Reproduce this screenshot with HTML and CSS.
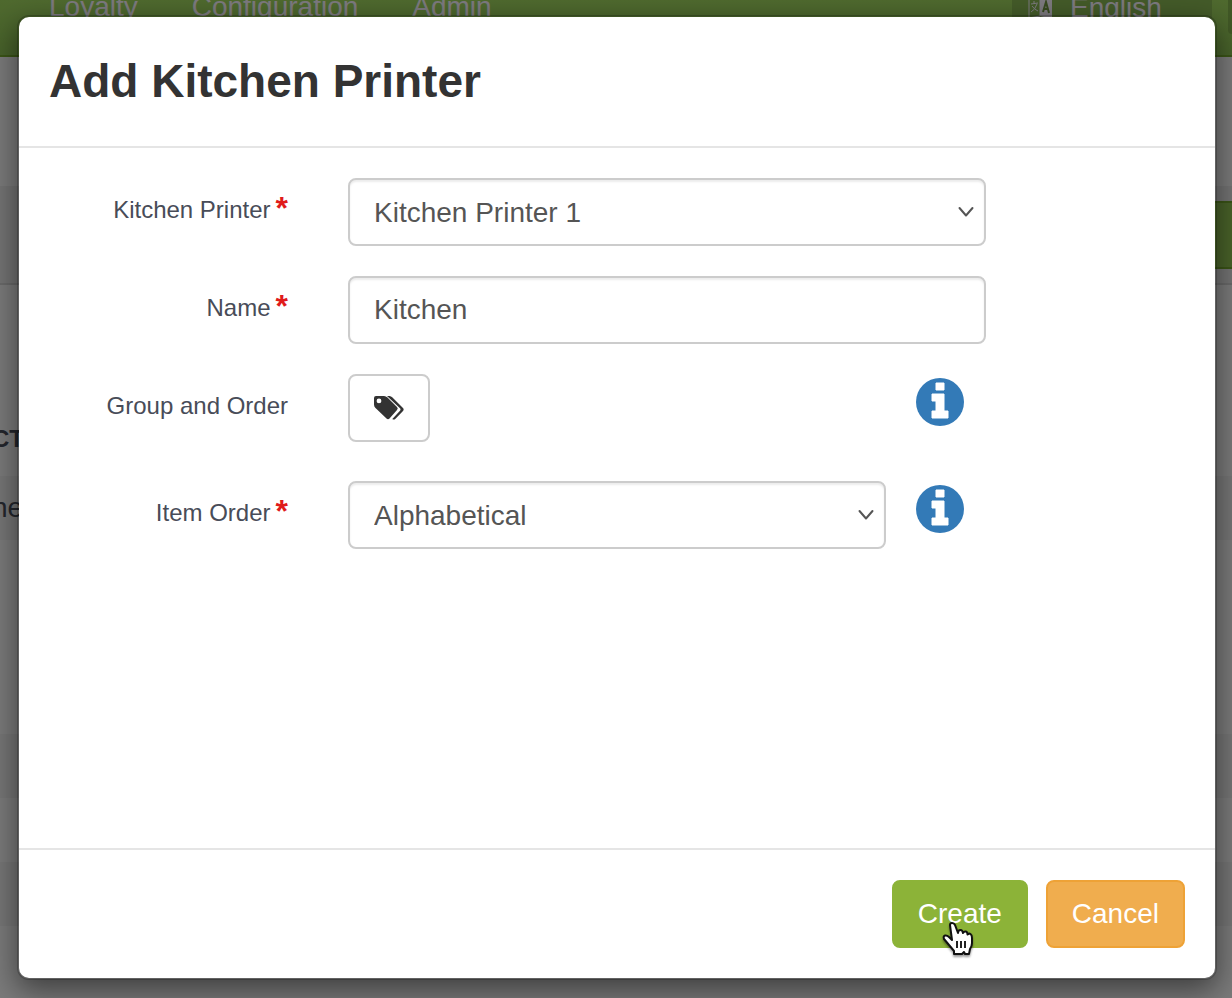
FILE: index.html
```html
<!DOCTYPE html>
<html lang="en">
<head>
    <meta charset="UTF-8">
    <title>Add Kitchen Printer</title>
    <link rel="stylesheet" href="styles.css">
</head>
<body>

    <!-- Page behind the modal -->
    <div class="page">
        <nav class="navbar">
            <a href="#">Loyalty</a>
            <a href="#">Configuration</a>
            <a href="#">Admin</a>
            <a href="#" class="language">
                <svg width="25" height="24" viewBox="0 0 25 24">
                    <path d="M1 3L12 1V20L1 22Z" fill="none" stroke="#faf5ff"/>
                    <path d="M12 0L24 3V23L12 20Z" fill="#faf5ff"/>
                    <path d="M3 8L10 7M6 5V7M9 8Q7 14 3 16M4 10Q7 14 10 15" fill="none" stroke="#faf5ff"/>
                    <path d="M15 16L18 6L21 17M16 13H20" fill="none" stroke="#6f9440" stroke-width="2"/>
                </svg>
                English
            </a>
            <span class="nav-end"></span>
        </nav>
        <div class="spacer"></div>
        <div class="toolbar">
            <div class="toolbar-action"></div>
        </div>
        <table class="list">
            <tr class="list-head"><th>CT</th></tr>
            <tr class="item odd"><td>ne</td></tr>
            <tr class="gap"><td></td></tr>
            <tr class="item odd"><td></td></tr>
            <tr class="item"><td></td></tr>
            <tr class="item odd"><td></td></tr>
        </table>
    </div>

    <div class="overlay">
        <form class="modal" role="dialog" aria-labelledby="modal-title">
            <div class="modal-header">
                <h1 id="modal-title">Add Kitchen Printer</h1>
            </div>

            <div class="modal-body">
                <div class="form-row">
                    <label for="printer">Kitchen Printer<span class="required">*</span></label>
                    <div class="select-box">
                        <select id="printer" class="field">
                            <option>Kitchen Printer 1</option>
                        </select>
                        <svg class="chevron" width="16" height="12" viewBox="0 0 16 12"><path d="M1.500 2L8 9.500L14.500 2"/></svg>
                    </div>
                </div>
                <div class="form-row">
                    <label for="name">Name<span class="required">*</span></label>
                    <input type="text" id="name" class="field" value="Kitchen">
                </div>
                <div class="form-row">
                    <label for="group">Group and Order</label>
                    <div class="with-info">
                        <button type="button" id="group" class="btn-tags" aria-label="Group and Order">
                            <svg width="30" height="24" viewBox="0 0 30 24">
                                <path fill="#333" fill-rule="evenodd" d="M2 0H10Q12 0 13.500 1.500L23 11Q24.500 12.500 23 14L15.500 22.500Q14 24 12.500 22.500L1.500 12Q0 10.500 0 8.500V2Q0 0 2 0ZM5 2.500A2.400 2.400 0 1 0 5 7.300A2.400 2.400 0 1 0 5 2.500Z"/>
                                <path fill="#333" d="M13 0H15.500Q17 0 18.500 1.500L29 12Q30.300 13.500 29 15L21.500 22.700Q19.800 24.300 18.300 22.900L26 14.800Q27 13.500 26 12.300Z"/>
                            </svg>
                        </button>
                        <svg class="info" width="48" height="48" viewBox="0 0 48 48">
                            <circle cx="24" cy="24" r="24" fill="#337ab7"/>
                            <path d="M20 5H28V12H20ZM16 16H28V33H32V40H16V33H20V23H16Z" fill="#fff" stroke="#fff" stroke-linejoin="round"/>
                        </svg>
                    </div>
                </div>
                <div class="form-row last">
                    <label for="order">Item Order<span class="required">*</span></label>
                    <div class="with-info">
                        <div class="select-box">
                            <select id="order" class="field">
                                <option>Alphabetical</option>
                            </select>
                            <svg class="chevron" width="16" height="12" viewBox="0 0 16 12"><path d="M1.500 2L8 9.500L14.500 2"/></svg>
                        </div>
                        <svg class="info" width="48" height="48" viewBox="0 0 48 48">
                            <circle cx="24" cy="24" r="24" fill="#337ab7"/>
                            <path d="M20 5H28V12H20ZM16 16H28V33H32V40H16V33H20V23H16Z" fill="#fff" stroke="#fff" stroke-linejoin="round"/>
                        </svg>
                    </div>
                </div>
            </div>

            <div class="modal-footer">
                <button type="button" class="btn btn-create">Create
                    <svg class="cursor" width="34" height="38" viewBox="0 0 34 38">
                        <path fill="#fff" stroke="#111" stroke-width="2" stroke-linejoin="round" d="M8 4Q8 2 10 2Q12 2 13 4L16 12Q16 9 18.500 9Q20.500 9 21 12Q22 10 24 10.500Q25.500 11 25.500 13.500Q27 12 28.500 13Q30 14 30 17V22Q30 25 28 28L27 33H23L22 31L20 33H12V30L7 24L2 18Q1 15 3 14.500Q5 14 7 16L10 19Z"/>
                        <path fill="none" stroke="#222" stroke-width="2" d="M15 20V27M19 20V27M23 20V27"/>
                    </svg>
                </button>
                <button type="button" class="btn btn-cancel">Cancel</button>
            </div>
        </form>
    </div>

</body>
</html>
```
FILE: styles.css
```css
* {
    box-sizing: border-box;
}
body {
    margin: 0;
    font-family: "Liberation Sans", Arial, sans-serif;
    font-size: 28px;
    color: #333;
    background-color: #fff;
}

/* page behind the modal */
.page {
    height: 100vh;
    overflow: hidden;
    color: #484c58;
    background-color: #f6f6f6;
}
.navbar {
    display: flex;
    gap: 54px;
    height: 57px;
    padding-left: 49px;
    background: linear-gradient(#9fd45e, #8fc455);
    border-bottom: 2px solid #76aa2e;
}
.navbar a {
    height: 32px;
    margin-top: -9px;
    line-height: 32px;
    color: #faf5ff;
    text-decoration: none;
}
.navbar .language {
    display: flex;
    gap: 17px;
    align-items: center;
    width: 200px;
    height: 44px;
    margin-left: auto;
    padding: 0 16px 10px;
    background-color: #88b653;
}
.nav-end {
    width: 4px;
    height: 34px;
    margin-left: -38px;
    background-color: #82b04c;
    border-radius: 0 0 0 8px;
}
.spacer {
    height: 129px;
}
.toolbar {
    display: flex;
    justify-content: flex-end;
    height: 99px;
    padding-top: 15px;
    background-color: #e9e9e9;
    border-bottom: 2px solid #d5d5d5;
}
.toolbar-action {
    width: 120px;
    height: 68px;
    background-color: #92c452;
    border: 2px solid #76aa2e;
    border-right: none;
}
.list {
    width: 100%;
    border-collapse: collapse;
}
.list th,
.list td {
    padding: 0;
    text-align: left;
    text-indent: -8px;
}
.list-head th {
    height: 191px;
    padding-top: 116px;
    font-size: 24px;
}
.item td {
    height: 64px;
    font-size: 28px;
}
.odd td {
    background-color: #ededed;
}
.gap td {
    height: 194px;
}

/* modal */
.overlay {
    position: absolute;
    inset: 0;
    padding: 15px 15px 18px 17px;
    background-color: rgba(0, 0, 0, 0.5);
}
.modal {
    display: flex;
    flex-direction: column;
    height: 100%;
    background-color: #fff;
    background-clip: padding-box;
    border: 2px solid rgba(0, 0, 0, 0.2);
    border-radius: 12px;
    box-shadow: 0 10px 30px rgba(0, 0, 0, 0.5);
}
.modal-header {
    padding: 30px;
    border-bottom: 2px solid #e5e5e5;
}
h1 {
    margin: 0;
    font-size: 46px;
    line-height: 69px;
}
.modal-body {
    flex: 1;
    padding: 30px;
}
.form-row {
    display: grid;
    grid-template-columns: 239px 1fr;
    column-gap: 60px;
    align-items: start;
    margin-bottom: 30px;
    padding-right: 199px;
}
.form-row.last {
    margin-top: 39px;
}
label {
    display: flex;
    justify-content: flex-end;
    gap: 5px;
    padding-top: 18px;
    font-size: 24px;
    line-height: 28px;
    color: #484c58;
}
.required {
    font-size: 32px;
    font-weight: bold;
    line-height: 24px;
    color: #e01b1b;
}
.field {
    display: block;
    width: 100%;
    height: 68px;
    padding: 0 24px;
    font-family: inherit;
    font-size: 28px;
    color: #555;
    background-color: #fff;
    border: 2px solid #ccc;
    border-radius: 8px;
    box-shadow: inset 0 2px 2px rgba(0, 0, 0, 0.08);
    appearance: none;
}
.select-box {
    position: relative;
    flex: 1;
}
.chevron {
    position: absolute;
    right: 12px;
    top: 28px;
    fill: none;
    stroke: #555;
    stroke-width: 2;
    stroke-linecap: round;
    stroke-linejoin: round;
    pointer-events: none;
}
.with-info {
    display: flex;
    justify-content: space-between;
    gap: 30px;
    padding-right: 22px;
}
.info {
    margin-top: 4px;
}
.btn-tags {
    display: flex;
    align-items: center;
    justify-content: center;
    width: 82px;
    height: 68px;
    padding: 0;
    background-color: #fff;
    border: 2px solid #ccc;
    border-radius: 8px;
}
.modal-footer {
    display: flex;
    justify-content: flex-end;
    gap: 18px;
    padding: 30px;
    border-top: 2px solid #e5e5e5;
}
.btn {
    position: relative;
    height: 68px;
    padding: 0 24px;
    font-family: inherit;
    font-size: 28px;
    color: #fff;
    border: 2px solid;
    border-radius: 8px;
    cursor: pointer;
}
.btn-create {
    background-color: #8cb338;
    border-color: #8cb338;
}
.btn-cancel {
    background-color: #f0ad4e;
    border-color: #eea236;
}
.cursor {
    position: absolute;
    left: 48px;
    top: 39px;
    filter: drop-shadow(0 2px 1px rgba(0, 0, 0, 0.4));
}
```
